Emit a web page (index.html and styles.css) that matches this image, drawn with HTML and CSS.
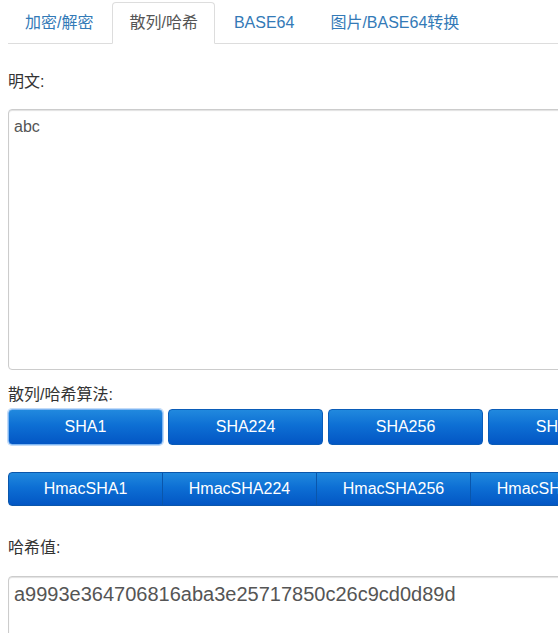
FILE: index.html
```html
<!DOCTYPE html>
<html lang="zh-CN">
<head>
<meta charset="utf-8">
<title>散列/哈希</title>
<link rel="stylesheet" href="styles.css">
</head>
<body>
<div class="page">
  <ul class="tabs">
    <li class="tab"><a class="tab-link">加密/解密</a></li>
    <li class="tab"><a class="tab-link active">散列/哈希</a></li>
    <li class="tab"><a class="tab-link">BASE64</a></li>
    <li class="tab"><a class="tab-link">图片/BASE64转换</a></li>
  </ul>
  <div class="pane">
    <div class="label label-plain">明文:</div>
    <textarea class="field field-input">abc</textarea>
    <div class="label label-algo">散列/哈希算法:</div>
    <div class="btn-row">
      <button class="btn btn-solo focused">SHA1</button>
      <button class="btn btn-solo">SHA224</button>
      <button class="btn btn-solo">SHA256</button>
      <button class="btn btn-solo">SHA384</button>
    </div>
    <div class="btn-group">
      <button class="btn btn-grouped">HmacSHA1</button>
      <button class="btn btn-grouped">HmacSHA224</button>
      <button class="btn btn-grouped">HmacSHA256</button>
      <button class="btn btn-grouped">HmacSHA384</button>
    </div>
    <div class="label label-hash">哈希值:</div>
    <textarea class="field field-output" readonly>a9993e364706816aba3e25717850c26c9cd0d89d</textarea>
  </div>
</div>
</body>
</html>
```

FILE: styles.css
```css
html, body {
  margin: 0;
  padding: 0;
  overflow: hidden;
  background: #fff;
}

body {
  font-family: "Liberation Sans", "Noto Sans CJK SC", sans-serif;
  font-size: 16px;
  color: #333;
}

.page {
  width: 1100px;
  padding: 2px 0 0 8px;
}

.tabs {
  list-style: none;
  margin: 0;
  padding: 0;
  display: flex;
  border-bottom: 1px solid #ddd;
}

.tab {
  margin-right: 2px;
  margin-bottom: -1px;
}

.tab-link {
  display: block;
  padding: 10px 16px;
  line-height: 20px;
  border: 1px solid transparent;
  border-radius: 4px 4px 0 0;
  color: #337ab7;
  cursor: pointer;
}

.tab-link.active {
  color: #555;
  background: #fff;
  border-color: #ddd;
  border-bottom-color: #fff;
}

.pane {
  padding-top: 27px;
}

.label {
  line-height: 22px;
  height: 22px;
  color: #333;
}

.label-algo {
  margin-top: 14px;
}

.label-hash {
  margin-top: 31px;
}

.field {
  display: block;
  box-sizing: border-box;
  width: 1000px;
  margin: 16px 0 0 0;
  border: 1px solid #ccc;
  border-radius: 4px;
  box-shadow: inset 0 1px 1px rgba(0, 0, 0, 0.12);
  font-family: "Liberation Sans", "Noto Sans CJK SC", sans-serif;
  color: #555;
  background: #fff;
  resize: none;
  outline: none;
}

.field-input {
  height: 261px;
  padding: 6px 5px;
  font-size: 16px;
  line-height: 22px;
}

.field-output {
  height: 120px;
  margin-top: 17px;
  padding: 5px 5px;
  font-size: 20px;
  line-height: 24px;
}

.btn {
  flex: 0 0 auto;
  box-sizing: border-box;
  width: 155px;
  margin: 0;
  padding: 0;
  border: 1px solid #0a5cb8;
  background: linear-gradient(to bottom, #2189de 0%, #0d6fd4 45%, #0356c4 100%);
  color: #fff;
  font-family: "Liberation Sans", "Noto Sans CJK SC", sans-serif;
  font-size: 16px;
  text-align: center;
  cursor: pointer;
}

.btn-row {
  display: flex;
  gap: 5px;
  margin-top: 3px;
}

.btn-solo {
  height: 36px;
  border-radius: 4px;
}

.btn-solo.focused {
  border-color: #7db5f2;
  box-shadow: 0 0 0 1px rgba(120, 175, 240, 0.45);
}

.btn-group {
  display: flex;
  margin-top: 27px;
}

.btn-grouped {
  height: 34px;
  border-radius: 0;
  border-color: #0a56ab;
  margin-left: -1px;
}

.btn-grouped:first-child {
  margin-left: 0;
  border-radius: 4px 0 0 4px;
}

.btn-grouped:last-child {
  border-radius: 0 4px 4px 0;
}
```
